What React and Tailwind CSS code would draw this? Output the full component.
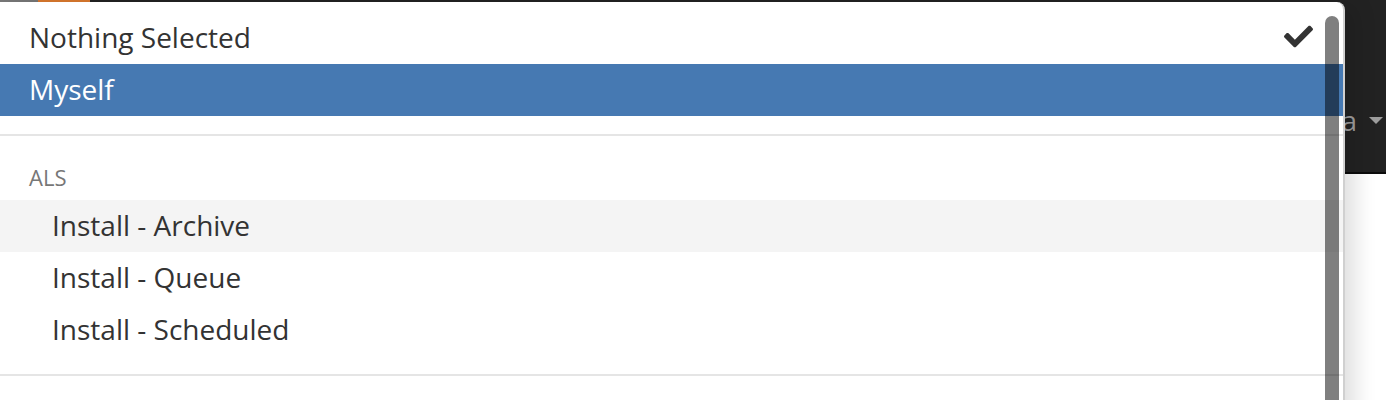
import { FaCheck } from "react-icons/fa";

const groupItems = ["Install - Archive", "Install - Queue", "Install - Scheduled"];

export default function App() {
  return (
    <div className="relative w-[1386px] h-[400px] overflow-hidden bg-white font-['Open_Sans',sans-serif]">
      {/* navbar behind the menu */}
      <div className="h-[174px] bg-[#222] border-b-2 border-[#0c0c0c] flex flex-col">
        <div className="flex h-[2px]">
          <div className="w-[38px] bg-[#777]" />
          <div className="w-[52px] bg-[#d9782d]" />
        </div>
        <div className="flex justify-end items-center gap-[12px] pr-[3px] pt-[101px] text-[28px] leading-[34px] text-[#9d9d9d]">
          <span>Sara</span>
          <span className="w-0 h-0 border-x-[7px] border-x-transparent border-t-[7px] border-t-[#9d9d9d]" />
        </div>
      </div>

      {/* dropdown menu */}
      <div className="absolute left-0 top-[2px] w-[1345px] h-[420px] bg-white rounded-tr-[8px] border-r-2 border-[#d0d0d0] shadow-[10px_4px_22px_rgba(0,0,0,0.13)] pt-[10px] text-[28px] leading-[40px] text-[#333]">
        <div className="h-[52px] flex items-center justify-between pl-[29px] pr-[30px] pb-[2px]">
          <span>Nothing Selected</span>
          <FaCheck size={29} className="text-[#333] -mt-[2px]" />
        </div>
        <div className="h-[52px] flex items-center px-[29px] pb-[2px] bg-[#4679b2] text-white">
          Myself
        </div>
        <div className="my-[18px] h-[2px] bg-[#e5e5e5]" />
        <div className="h-[46px] pt-[10px] px-[29px] text-[22px] leading-[26px] text-[#777]">ALS</div>
        {groupItems.map((item, i) => (
          <div
            key={item}
            className={`h-[52px] flex items-center pl-[52px] pb-[2px] ${i === 0 ? "bg-[#f4f4f4]" : ""}`}
          >
            {item}
          </div>
        ))}
        <div className="my-[18px] h-[2px] bg-[#e5e5e5]" />

        {/* scrollbar thumb */}
        <div className="absolute right-[4px] top-[14px] w-[14px] h-[420px] rounded-full bg-black/50" />
      </div>
    </div>
  );
}
